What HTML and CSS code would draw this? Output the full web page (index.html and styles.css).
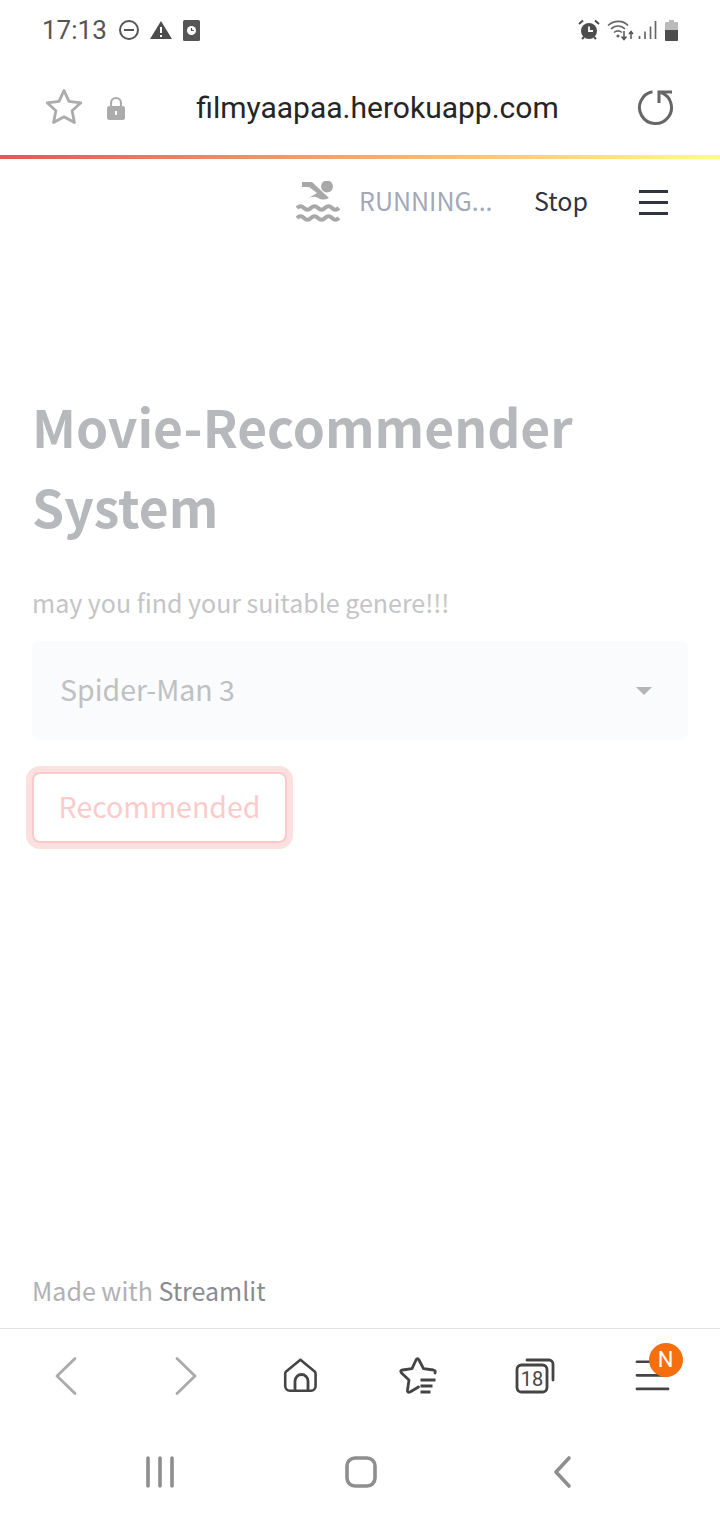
FILE: index.html
```html
<!DOCTYPE html>
<html>
<head>
    <title>Movie-Recommender System</title>
    <link rel="stylesheet" href="styles.css">
</head>
<body>
    <div class="phone">
        <!-- Android status bar -->
        <div class="status-bar">
            <span class="clock">17:13</span>
            <svg class="st-icon" width="22" height="22" viewBox="0 0 22 22"><circle cx="11" cy="11" r="9" fill="none" stroke="#555" stroke-width="2"/><path d="M6 11h10" stroke="#555" stroke-width="2"/></svg>
            <svg class="st-icon" width="22" height="20" viewBox="0 0 22 20"><path d="M11 1 L22 19 H0 Z" fill="#4d4d4d"/><path d="M11 7v6M11 15v2" stroke="#fff" stroke-width="2"/></svg>
            <svg class="st-icon" width="17" height="21" viewBox="0 0 17 21"><rect width="17" height="21" rx="1.5" fill="#555"/><circle cx="8.5" cy="10.5" r="4.5" fill="#fff"/><path d="M8.5 8v2.5h2.5" stroke="#555" stroke-width="1.2" fill="none"/></svg>
            <div class="status-right">
                <svg width="22" height="22" viewBox="0 0 22 22"><circle cx="11" cy="12" r="8" fill="#4d4d4d"/><path d="M11 7.5V12h4" stroke="#fff" stroke-width="1.8" fill="none"/><path d="M1 5l4-3.5M21 5l-4-3.5M4 20l2-2M18 20l-2-2" stroke="#4d4d4d" stroke-width="2"/></svg>
                <svg class="wifi" width="27" height="22" viewBox="0 0 27 22"><g fill="none" stroke="#666" stroke-width="1.6"><path d="M1 6.500C7 1 16 1 21 6.500"/><path d="M4 10C8 6 14 6 18 10"/><path d="M7 13.500C9.500 11.500 12.500 11.500 15 13.500"/></g><circle cx="11" cy="17" r="1.600" fill="#666"/><path d="M17 12v8M14.500 17.500l2.500 3 2.500-3M24 20v-7M22 15l2-2.500 2 2.500" fill="none" stroke="#555" stroke-width="1.500"/></svg>
                <svg class="signal" width="19" height="20" viewBox="0 0 19 20"><path d="M1.500 16v3M7 11.500V19M12.500 6.500V19M17.500 1v18" stroke="#666" stroke-width="1.700"/></svg>
                <svg class="battery" width="13" height="21" viewBox="0 0 13 21"><path d="M4 0h5v2h3a1 1 0 0 1 1 1v7H0V3a1 1 0 0 1 1-1h3z" fill="#bbb"/><path d="M0 10h13v10a1 1 0 0 1-1 1H1a1 1 0 0 1-1-1z" fill="#4d4d4d"/></svg>
            </div>
        </div>

        <!-- Browser address bar -->
        <div class="url-bar">
            <svg class="url-star" width="40" height="40" viewBox="0 0 40 40"><path d="M20 3.500l5 10.800 11.800 1.500-8.700 8 2.300 11.700L20 29.700 9.600 35.500l2.300-11.700-8.700-8L15 14.300z" fill="none" stroke="#ababab" stroke-width="2.800" stroke-linejoin="round"/></svg>
            <svg class="url-lock" width="18" height="24" viewBox="0 0 18 24"><path d="M4 11V7a5 5 0 0 1 10 0v4" fill="none" stroke="#ababab" stroke-width="2.200"/><rect y="10" width="18" height="14" rx="2.500" fill="#ababab"/><path d="M9 15v4" stroke="#fff" stroke-width="2"/></svg>
            <div class="url-text">filmyaapaa.herokuapp.com</div>
            <svg class="url-reload" width="38" height="36" viewBox="0 0 38 36"><path d="M15.500 1.800A16 16 0 1 0 24 2.500" fill="none" stroke="#666" stroke-width="3"/><path d="M22 13V2H35" fill="none" stroke="#666" stroke-width="3"/></svg>
        </div>
        <div class="progress"></div>

        <!-- Streamlit header -->
        <div class="app-header">
            <svg class="swim" width="44" height="42" viewBox="0 0 44 42"><circle cx="31" cy="5.500" r="6" fill="#a8a8a8"/><path d="M6 1H16L33 17Q27 20 22 17T11 18L21 12 13 6H6Z" fill="#a8a8a8"/><g fill="none" stroke="#a8a8a8" stroke-width="4"><path d="M1 27q3.500-3.500 7 0t7 0 7 0 7 0 7 0 7 0"/><path d="M1 37q3.500-3.500 7 0t7 0 7 0 7 0 7 0 7 0"/></g></svg>
            <span class="running">RUNNING...</span>
            <span class="stop">Stop</span>
            <div class="burger"><i></i><i></i><i></i></div>
        </div>

        <div class="main">
            <h1 class="title">Movie-Recommender System</h1>
            <p class="subtitle">may you find your suitable genere!!!</p>
            <div class="select">
                <span>Spider-Man 3</span>
                <div class="caret"></div>
            </div>
            <button class="rec-button">Recommended</button>
        </div>

        <div class="made-with">Made with <span>Streamlit</span></div>

        <!-- Browser toolbar -->
        <div class="toolbar">
            <svg width="40" height="40" viewBox="0 0 40 40"><path d="M29 2.500L11 20l18 17.500" fill="none" stroke="#aaa" stroke-width="2.800" stroke-linecap="round" stroke-linejoin="round" transform="translate(-1 0)"/></svg>
            <svg class="fwd" width="40" height="40" viewBox="0 0 40 40"><path d="M11 2.500L29 20 11 37.500" fill="none" stroke="#aaa" stroke-width="2.800" stroke-linecap="round" stroke-linejoin="round"/></svg>
            <svg width="40" height="40" viewBox="0 0 40 40"><path d="M20 4L35.500 16.500a3 3 0 0 1 1 2.500V32a5 5 0 0 1-5 5H8.500a5 5 0 0 1-5-5V19a3 3 0 0 1 1-2.500z" fill="none" stroke="#444" stroke-width="2.800" stroke-linejoin="round" transform="translate(1 0) scale(.92 .94)"/><path d="M14 34V25a6 6 0 0 1 13 0v9" fill="none" stroke="#444" stroke-width="2.800"/></svg>
            <svg width="40" height="40" viewBox="0 0 40 40"><path d="M20.500 31L12 36Q9 37 9.500 34L11 24 3.500 17Q1.500 14.500 4.500 14L14 12.700 18 4Q19.500 1.500 21 4L25.500 12.700 35.500 14Q38 14.500 37 17" fill="none" stroke="#444" stroke-width="2.800" stroke-linecap="round" stroke-linejoin="round"/><path d="M22.500 24H37.500M22.500 30H34.500M22.500 36H32.500" stroke="#444" stroke-width="2.800"/></svg>
            <svg width="42" height="40" viewBox="0 0 42 40"><rect x="3" y="9" width="30" height="27" rx="4.500" fill="none" stroke="#444" stroke-width="2.800"/><path d="M13 4H35a4 4 0 0 1 4 4V24" fill="none" stroke="#444" stroke-width="2.800" stroke-linecap="round"/><text x="18" y="30" class="tab-count">18</text></svg>
            <div class="menu-btn">
                <svg width="40" height="40" viewBox="0 0 40 40"><path d="M5 8H36M5 22H36M5 36H36" stroke="#444" stroke-width="2.800" stroke-linecap="round" transform="translate(0 -2) scale(1 .97)"/></svg>
                <div class="badge">N</div>
            </div>
        </div>

        <!-- Android nav bar -->
        <div class="nav-bar">
            <svg width="32" height="34" viewBox="0 0 32 34"><path d="M4 3V31M16 3V31M28 3V31" stroke="#8e8e8e" stroke-width="3.600" stroke-linecap="round"/></svg>
            <svg width="32" height="34" viewBox="0 0 32 34"><rect x="2" y="3" width="28" height="28" rx="8" fill="none" stroke="#8e8e8e" stroke-width="3.600"/></svg>
            <svg class="nav-back" width="32" height="34" viewBox="0 0 32 34"><path d="M23 3L10 17l13 14" fill="none" stroke="#8e8e8e" stroke-width="3.600" stroke-linecap="round" stroke-linejoin="round"/></svg>
        </div>
    </div>
</body>
</html>
```

FILE: styles.css
```css
body, html {
    margin: 0;
    background: #fff;
}

.phone {
    width: 720px;
    height: 1520px;
    display: flex;
    flex-direction: column;
    overflow: hidden;
    font-family: "Noto Sans CJK SC", "Noto Sans", sans-serif;
}

.status-bar {
    height: 60px;
    display: flex;
    align-items: center;
    padding: 0 42px;
    box-sizing: border-box;
    font-family: Roboto, sans-serif;
}

.clock {
    font-size: 26px;
    color: #555;
    margin-right: 11px;
}

.st-icon {
    margin-right: 10.5px;
    flex: none;
}

.status-right {
    margin-left: auto;
    display: flex;
    align-items: center;
}

.wifi {
    margin-left: 7px;
}

.signal {
    margin-left: 4px;
}

.battery {
    margin-left: 8px;
}

.url-bar {
    height: 95px;
    display: flex;
    align-items: center;
    padding: 0 45px 0 44px;
}

.url-star {
    margin-top: -1px;
}

.url-lock {
    margin-left: 23px;
}

.url-text {
    flex: 1;
    text-align: center;
    font-family: Roboto, sans-serif;
    font-size: 30px;
    color: #252525;
    margin-right: 7px;
}

.progress {
    height: 4px;
    background: linear-gradient(90deg, #e9545e 0%, #f5a96e 50%, #fffd80 100%);
}

.app-header {
    height: 86px;
    display: flex;
    align-items: center;
    padding-left: 296px;
}

.swim {
    flex: none;
}

.running {
    font-size: 25px;
    color: #a3a8b8;
    margin-left: 19px;
    width: 175px;
    padding-bottom: 4px;
}

.stop {
    font-size: 25px;
    color: #31333f;
    padding-bottom: 4px;
}

.burger {
    margin-left: 51px;
    width: 29px;
    height: 25px;
    display: flex;
    flex-direction: column;
    justify-content: space-between;
}

.burger i {
    display: block;
    height: 3px;
    background: #31333f;
}

.main {
    flex: 1;
    padding: 141px 32px 0;
}

.title {
    margin: 0;
    font-size: 51.5px;
    line-height: 80px;
    font-weight: 700;
    color: #b7b8bc;
}

.subtitle {
    margin: 36px 0 0;
    font-size: 25px;
    line-height: 40px;
    color: #c4c4c6;
}

.select {
    margin-top: 19px;
    height: 99px;
    background: #fafbfd;
    border-radius: 7px;
    display: flex;
    align-items: center;
    justify-content: space-between;
    padding: 0 36px 0 28px;
    font-size: 28.5px;
    color: #bfc0c2;
}

.select span {
    padding-bottom: 4px;
}

.caret {
    width: 0;
    height: 0;
    border-left: 8px solid transparent;
    border-right: 8px solid transparent;
    border-top: 8px solid #b5b5b8;
}

.rec-button {
    display: block;
    margin: 32px 0 0;
    width: 255px;
    height: 71px;
    box-sizing: border-box;
    background: #fff;
    border: 2px solid #fbcaca;
    border-radius: 8px;
    box-shadow: 0 0 0 6px #ffe0e0;
    font-family: inherit;
    font-size: 28.5px;
    color: #fbcbcb;
    padding: 0 0 4px;
}

.made-with {
    height: 72px;
    line-height: 66px;
    padding-left: 32px;
    font-size: 25px;
    color: #b0b1b5;
    box-sizing: border-box;
    border-bottom: 1px solid #e4e4e4;
    margin-top: -1px;
}

.made-with span {
    color: #8a8b92;
}

.toolbar {
    height: 96px;
    box-sizing: border-box;
    padding: 27px 0 0 8px;
    display: grid;
    grid-template-columns: repeat(6, 117px);
    justify-items: center;
    align-items: start;
}

.fwd {
    margin-left: 5px;
}

.tab-count {
    font-family: Roboto, sans-serif;
    font-size: 20px;
    fill: #444;
    text-anchor: middle;
}

.menu-btn {
    position: relative;
    width: 40px;
    height: 40px;
}

.badge {
    position: absolute;
    left: 17px;
    top: -13px;
    width: 34px;
    height: 34px;
    border-radius: 50%;
    background: #f56f0f;
    color: #fff;
    font-family: Roboto, sans-serif;
    font-size: 22px;
    line-height: 34px;
    text-align: center;
}

.nav-bar {
    height: 95px;
    box-sizing: border-box;
    padding: 30px 0 0 59px;
    display: grid;
    grid-template-columns: repeat(3, 201px);
    justify-items: center;
    align-items: start;
}
```
